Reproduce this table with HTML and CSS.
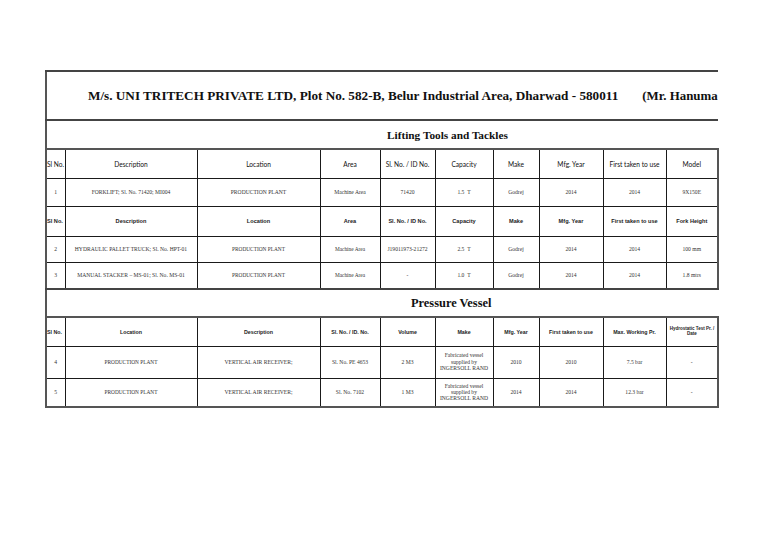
FILE: index.html
```html
<!DOCTYPE html>
<html>
<head>
<meta charset="utf-8">
<link rel="stylesheet" href="styles.css">
</head>
<body>
<div class="page">
<table class="sheet">
<colgroup>
<col class="c1"><col class="c2"><col class="c3"><col class="c4"><col class="c5">
<col class="c6"><col class="c7"><col class="c8"><col class="c9"><col class="c10">
</colgroup>
<tr class="r-title">
<td colspan="10" class="title-cell"><div class="title">M/s. UNI TRITECH PRIVATE LTD, Plot No. 582-B, Belur Industrial Area, Dharwad - 580011<span class="contact">(Mr. Hanuma</span></div></td>
</tr>
<tr class="r-sec1">
<td colspan="10" class="sec-cell"><div class="sec sec-lift">Lifting Tools and Tackles</div></td>
</tr>
<tr class="r-h1 hdr1">
<td>Sl No.</td><td>Description</td><td>Location</td><td>Area</td><td>Sl. No. / ID No.</td><td>Capacity</td><td>Make</td><td>Mfg. Year</td><td>First taken to use</td><td>Model</td>
</tr>
<tr class="r-d1 data">
<td>1</td><td>FORKLIFT; Sl. No. 71420; MI004</td><td>PRODUCTION PLANT</td><td>Machine Area</td><td>71420</td><td>1.5&nbsp;&nbsp;T</td><td>Godrej</td><td>2014</td><td>2014</td><td>9X150E</td>
</tr>
<tr class="r-h2 hdr2">
<td>Sl No.</td><td>Description</td><td>Location</td><td>Area</td><td>Sl. No. / ID No.</td><td>Capacity</td><td>Make</td><td>Mfg. Year</td><td>First taken to use</td><td>Fork Height</td>
</tr>
<tr class="r-d2 data">
<td>2</td><td>HYDRAULIC PALLET TRUCK; Sl. No. HPT-01</td><td class="sm">PRODUCTION PLANT</td><td class="sm">Machine Area</td><td>J19011973-21272</td><td>2.5&nbsp;&nbsp;T</td><td>Godrej</td><td>2014</td><td>2014</td><td>100 mm</td>
</tr>
<tr class="r-d3 data last1">
<td>3</td><td>MANUAL STACKER – MS-01; Sl. No. MS-01</td><td class="sm">PRODUCTION PLANT</td><td class="sm">Machine Area</td><td>-</td><td>1.0&nbsp;&nbsp;T</td><td>Godrej</td><td>2014</td><td>2014</td><td>1.8 mtrs</td>
</tr>
<tr class="r-sec2">
<td colspan="10" class="sec-cell"><div class="sec sec-pv">Pressure Vessel</div></td>
</tr>
<tr class="r-h3 hdr3 first3">
<td>Sl No.</td><td>Location</td><td>Description</td><td>Sl. No. / ID. No.</td><td>Volume</td><td>Make</td><td>Mfg. Year</td><td>First taken to use</td><td>Max. Working Pr.</td><td class="tight"><div class="hydro">Hydrostatic Test Pr. /<br>Date</div></td>
</tr>
<tr class="r-d4 data">
<td>4</td><td class="sm">PRODUCTION PLANT</td><td>VERTICAL AIR RECEIVER;</td><td>Sl. No. PE 4653</td><td>2 M3</td><td class="make">Fabricated vessel supplied by INGERSOLL RAND</td><td>2010</td><td>2010</td><td>7.5 bar</td><td>-</td>
</tr>
<tr class="r-d5 data last2">
<td>5</td><td class="sm">PRODUCTION PLANT</td><td>VERTICAL AIR RECEIVER;</td><td>Sl. No. 7102</td><td>1 M3</td><td class="make">Fabricated vessel supplied by INGERSOLL RAND</td><td>2014</td><td>2014</td><td>12.3 bar</td><td>-</td>
</tr>
</table>
</div>
</body>
</html>
```

FILE: styles.css
```css
html, body {
  margin: 0;
  padding: 0;
  background: #ffffff;
}

.page {
  padding: 70px 0 0 45px;
}

.sheet {
  table-layout: fixed;
  border-collapse: collapse;
  width: 674px;
  color: #111;
}

.c1 { width: 19px; }
.c2 { width: 132px; }
.c3 { width: 123px; }
.c4 { width: 60px; }
.c5 { width: 55px; }
.c6 { width: 58px; }
.c7 { width: 46px; }
.c8 { width: 64px; }
.c9 { width: 63px; }
.c10 { width: 52px; }

.sheet td {
  border: 1px solid #1a1a1a;
  padding: 0;
  text-align: center;
  vertical-align: middle;
  overflow: hidden;
  white-space: nowrap;
}

.sheet td:first-child {
  border-left: 2px solid #555;
}

.title-cell {
  border-top: 2px solid #444 !important;
  border-right: none !important;
  border-bottom: 2px solid #444 !important;
}

.sec-cell {
  border-right: none !important;
  border-top: none;
  border-bottom: none;
}

.r-sec1 .sec-cell { border-bottom: 2px solid #555; }

.r-title { height: 49px; }
.r-sec1 { height: 29px; }
.r-h1 { height: 29px; }
.r-d1 { height: 28px; }
.r-h2 { height: 30px; }
.r-d2 { height: 26px; }
.r-d3 { height: 27px; }
.r-sec2 { height: 28px; }
.r-h3 { height: 29px; }
.r-d4 { height: 32px; }
.r-d5 { height: 29px; }

.title {
  width: 672px;
  overflow: hidden;
  white-space: nowrap;
  text-align: left;
  padding-left: 41px;
  box-sizing: border-box;
  font-family: "Liberation Serif", "Times New Roman", serif;
  font-weight: bold;
  font-size: 13.2px;
  color: #111;
}

.contact {
  margin-left: 24px;
  font-size: 12.9px;
}

.sec {
  font-family: "Liberation Serif", "Times New Roman", serif;
  font-weight: bold;
  color: #111;
  text-align: left;
}

.sec-lift {
  font-size: 11.3px;
  padding-left: 340px;
  padding-top: 1px;
}

.sec-pv {
  font-size: 12.4px;
  padding-left: 364px;
}

.hdr1 td {
  font-family: "Lato", "Open Sans", sans-serif;
  font-size: 6.6px;
  color: #111;
}

.hdr1 td:first-child { text-align: left; }

.hdr2 td {
  font-family: "Liberation Sans", Arial, sans-serif;
  font-weight: bold;
  font-size: 5.6px;
  color: #222;
}

.hdr2 td:first-child,
.hdr3 td:first-child { text-align: left; }

.hdr3 td {
  font-family: "Liberation Sans", Arial, sans-serif;
  font-weight: bold;
  font-size: 5.3px;
  color: #222;
}

.hdr3 td.tight {
  vertical-align: top;
  padding-top: 8px;
}

.hydro {
  width: 51px;
  text-align: center;
  font-size: 4.5px;
  line-height: 1.15;
  white-space: nowrap;
  overflow: hidden;
}

.data td {
  font-family: "Liberation Serif", "Times New Roman", serif;
  font-size: 5.6px;
  color: #333;
}

.data td.sm {
  font-size: 5.35px;
}

.data td.make {
  white-space: normal;
  line-height: 1.15;
  padding: 0 1px;
}

.last1 td { border-bottom: 2px solid #444; }

.first3 td { border-top: 2px solid #555; }

.last2 td { border-bottom: 2px solid #555; }

.sheet td:last-child { border-right: 2px solid #555; }

.sheet td.title-cell,
.sheet td.sec-cell {
  border-right: none;
}
```
